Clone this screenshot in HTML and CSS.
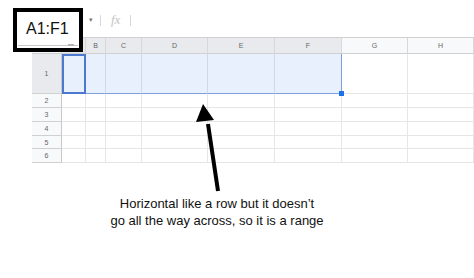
FILE: index.html
```html
<!DOCTYPE html>
<html lang="en">
<head>
  <meta charset="UTF-8" />
  <title>Range A1:F1</title>
  <link rel="stylesheet" href="styles.css">
</head>
<body>
  <div class="page">
    <div class="name-box">
      <span class="name-text">A1:F1</span>
      <span class="name-rule"></span>
    </div>

    <div class="formula-bar">
      <span class="drop">&#9662;</span>
      <span class="sep"></span>
      <span class="fx">fx</span>
      <span class="sep"></span>
    </div>

    <div class="grid">
      <div class="hd corner"></div>
      <div class="hd col on"></div>
      <div class="hd col on">B</div>
      <div class="hd col on">C</div>
      <div class="hd col on">D</div>
      <div class="hd col on">E</div>
      <div class="hd col on">F</div>
      <div class="hd col">G</div>
      <div class="hd col">H</div>

      <div class="hd row on">1</div>
      <div class="cell sel active"></div>
      <div class="cell sel"></div>
      <div class="cell sel"></div>
      <div class="cell sel"></div>
      <div class="cell sel"></div>
      <div class="cell sel last"><span class="handle"></span></div>
      <div class="cell under"></div>
      <div class="cell under"></div>
    </div>

    <svg class="arrow" width="40" height="90" viewBox="0 0 40 90">
      <line x1="22" y1="87" x2="12" y2="20" stroke="#000" stroke-width="4" />
      <polygon points="7,0 0,18 18,16" fill="#000" />
    </svg>

    <p class="caption">Horizontal like a row but it doesn’t<br>go all the way across, so it is a range</p>
  </div>

  <script>
    // rows 2-6 of the sheet
    const grid = document.querySelector('.grid');
    for (let r = 2; r <= 6; r++) {
      const head = document.createElement('div');
      head.className = 'hd row';
      head.innerText = r;
      grid.appendChild(head);
      for (let c = 0; c < 8; c++) {
        const cell = document.createElement('div');
        cell.className = 'cell';
        grid.appendChild(cell);
      }
    }
  </script>
</body>
</html>
```

FILE: styles.css
```css
html, body {
  margin: 0;
  padding: 0;
  background: white;
  font-family: 'Liberation Sans', Arial, sans-serif;
}

.page {
  position: relative;
  width: 474px;
  height: 278px;
  overflow: hidden;
}

.name-box {
  position: absolute;
  top: 8px;
  left: 13px;
  width: 62px;
  height: 36px;
  border: 4px solid black;
  background: white;
  z-index: 10;
}

.name-text {
  position: absolute;
  top: 8px;
  left: 9px;
  font-size: 16px;
  color: #111;
}

.name-rule {
  position: absolute;
  left: 1px;
  right: 1px;
  bottom: 2px;
  height: 1px;
  background: #c8c8c8;
}

.name-rule::after {
  content: "";
  position: absolute;
  right: 4px;
  bottom: 0;
  width: 6px;
  height: 2px;
  background: #b5b5b5;
}

.formula-bar {
  height: 38px;
  display: flex;
  align-items: center;
  gap: 7px;
  padding-left: 89px;
  padding-top: 2px;
  box-sizing: border-box;
}

.drop {
  font-size: 7px;
  color: #777;
}

.sep {
  width: 1px;
  height: 11px;
  background: #d6d6d6;
}

.fx {
  font-family: 'Liberation Serif', serif;
  font-style: italic;
  font-size: 13px;
  color: #c4c4c4;
  margin: 0 3px;
}

.grid {
  margin-left: 32px;
  display: grid;
  grid-template-columns: 30px 24px 20px 36px 66px 67px 67px 66px 66px;
  grid-template-rows: 16px 40px 14px 14px 14px 13px 14px;
  border-top: 1px solid #d0d0d0;
  margin-top: -1px;
}

.hd {
  background: #f8f9fa;
  color: #666;
  font-size: 7px;
  display: flex;
  align-items: center;
  justify-content: center;
  border-right: 1px solid #d8d8d8;
  border-bottom: 1px solid #d0d0d0;
  box-sizing: border-box;
}

.hd.on {
  background: #e8eaed;
}

.hd.corner {
  background: #f8f9fa;
}

.hd.row {
  border-right: 1px solid #c8c8c8;
}

.cell {
  position: relative;
  border-right: 1px solid #e6e6e6;
  border-bottom: 1px solid #e6e6e6;
  box-sizing: border-box;
}

.cell.sel {
  background: #e8f0fe;
  border-right-color: #d0d9ea;
  border-bottom-color: #7f9fdc;
}

.cell.sel.last {
  border-right-color: #7f9fdc;
}

.cell.active {
  border: 2px solid #4c78d0;
}

.handle {
  position: absolute;
  right: -3px;
  bottom: -3px;
  width: 5px;
  height: 5px;
  background: #1a73e8;
  z-index: 2;
}

.arrow {
  position: absolute;
  left: 196px;
  top: 104px;
}

.caption {
  margin: 32px 40px 0 0;
  text-align: center;
  font-size: 13px;
  line-height: 17px;
  color: #111;
}
```
